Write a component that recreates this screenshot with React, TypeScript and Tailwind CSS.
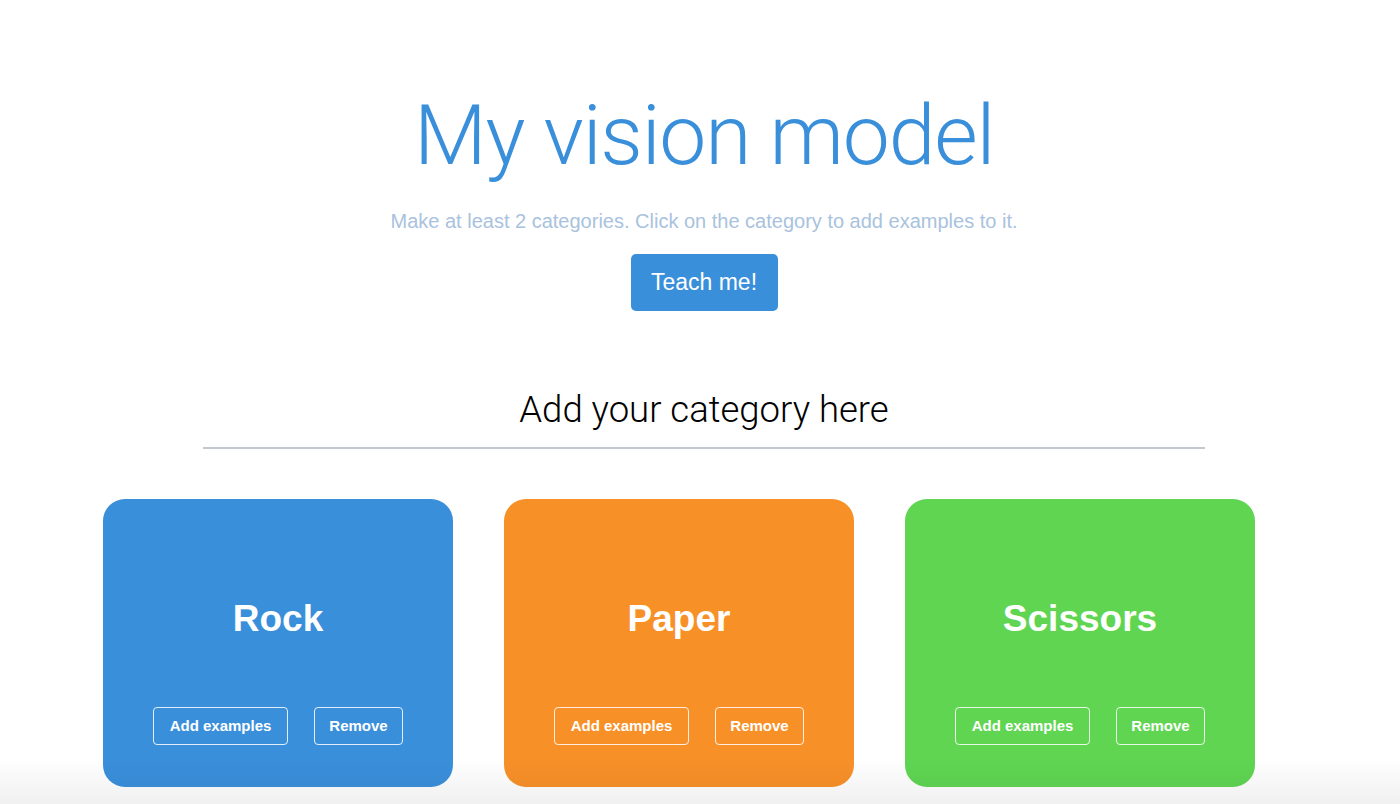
import React from "react";

interface Category {
  name: string;
  color: string;
}

const categories: Category[] = [
  { name: "Rock", color: "bg-[#3a8fdb]" },
  { name: "Paper", color: "bg-[#f89028]" },
  { name: "Scissors", color: "bg-[#5fd552]" },
];

function CategoryCard({ name, color }: Category) {
  return (
    <div className={`${color} w-[350px] h-[288px] rounded-[22px] flex flex-col items-center`}>
      <h2 className="mt-[98px] text-[37px] leading-[44px] font-bold text-white">{name}</h2>
      <div className="mt-[66px] flex gap-[26px]">
        <button className="h-[38px] w-[135px] rounded-[4px] border border-white/85 text-[15px] font-bold text-white">
          Add examples
        </button>
        <button className="h-[38px] w-[89px] rounded-[4px] border border-white/85 text-[15px] font-bold text-white">
          Remove
        </button>
      </div>
    </div>
  );
}

export default function App() {
  return (
    <div className="relative min-h-[804px] bg-white font-['Liberation_Sans',Arial,sans-serif] overflow-hidden">
      {/* header */}
      <div className="flex flex-col items-center pt-[86px]">
        <h1 className="pl-[8px] font-['Roboto',sans-serif] text-[84px] leading-[100px] tracking-[-1.2px] font-light text-[#3a8fdb]">My vision model</h1>
        <p className="mt-[22px] pl-[8px] text-[20px] leading-[26px] text-[#a9c2de]">
          Make at least 2 categories. Click on the category to add examples to it.
        </p>
        <button className="mt-[20px] ml-[8px] h-[57px] w-[147px] rounded-[5px] bg-[#3a8fdb] text-[23px] text-white">
          Teach me!
        </button>
      </div>

      {/* category section */}
      <div className="mt-[77px] flex flex-col items-center">
        <h3 className="pl-[8px] font-['Roboto',sans-serif] text-[36.5px] leading-[44px] font-light text-black">Add your category here</h3>
        <div className="mt-[15px] ml-[8px] w-[1002px] h-[2px] bg-[#c3c8d2]" />
      </div>

      <div className="mt-[50px] pl-[103px] flex gap-[51px]">
        {categories.map((c) => (
          <CategoryCard key={c.name} {...c} />
        ))}
      </div>

      {/* bottom fade */}
      <div className="pointer-events-none absolute inset-x-0 bottom-0 h-[46px] bg-gradient-to-b from-transparent to-black/[0.06]" />
    </div>
  );
}
